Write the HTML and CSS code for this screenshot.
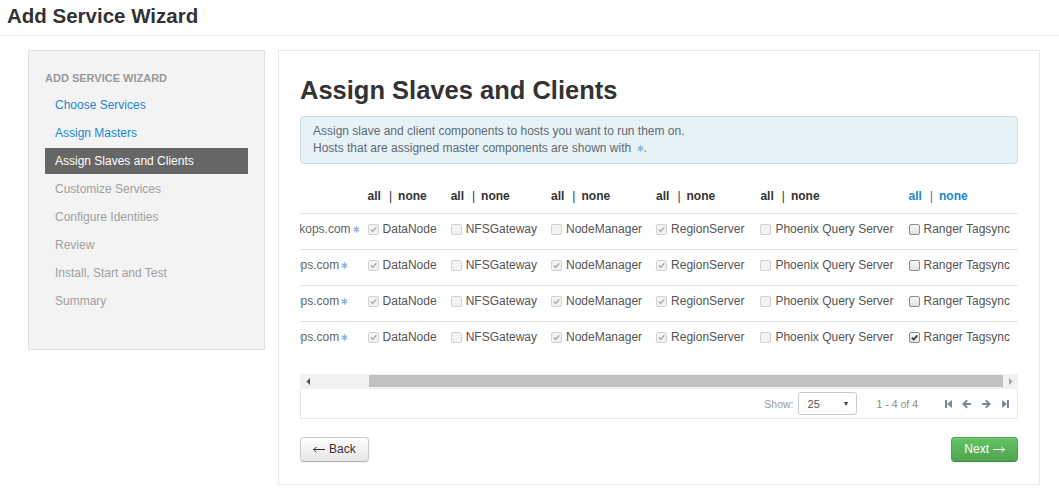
FILE: index.html
```html
<!DOCTYPE html>
<html>
<head>
<meta charset="utf-8">
<title>Add Service Wizard</title>
<link rel="stylesheet" href="styles.css">
</head>
<body>
<header class="page-header"><h1>Add Service Wizard</h1></header>
<div class="layout">
  <aside class="sidebar">
    <div class="nav-header">Add Service Wizard</div>
    <ul class="nav">
      <li><a class="link">Choose Services</a></li>
      <li><a class="link">Assign Masters</a></li>
      <li><a class="active">Assign Slaves and Clients</a></li>
      <li><a class="disabled">Customize Services</a></li>
      <li><a class="disabled">Configure Identities</a></li>
      <li><a class="disabled">Review</a></li>
      <li><a class="disabled">Install, Start and Test</a></li>
      <li><a class="disabled">Summary</a></li>
    </ul>
  </aside>
  <main class="panel">
    <h2>Assign Slaves and Clients</h2>
    <div class="alert">
      Assign slave and client components to hosts you want to run them on.<br>
      Hosts that are assigned master components are shown with <svg class="star" viewBox="0 0 10 10"><path d="M5 0.5V9.5M1.1 2.75L8.9 7.25M1.1 7.25L8.9 2.75"/></svg>.
    </div>
    <div class="scroll">
      <table class="hosts">
        <thead>
          <tr>
            <th class="host"></th>
            <th><span class="sel">all</span><span class="sep">|</span><span class="sel">none</span></th>
            <th><span class="sel">all</span><span class="sep">|</span><span class="sel">none</span></th>
            <th><span class="sel">all</span><span class="sep">|</span><span class="sel">none</span></th>
            <th class="c4"><span class="sel">all</span><span class="sep">|</span><span class="sel">none</span></th>
            <th class="c5"><span class="sel">all</span><span class="sep">|</span><span class="sel">none</span></th>
            <th class="last"><span class="sel blue">all</span><span class="sep blue">|</span><span class="sel blue">none</span></th>
          </tr>
        </thead>
        <tbody>
          <tr>
            <td class="host">node1.cluster.stackops.com<svg class="star" viewBox="0 0 10 10"><path d="M5 0.5V9.5M1.1 2.75L8.9 7.25M1.1 7.25L8.9 2.75"/></svg></td>
            <td><span class="cb"><svg viewBox="0 0 9 9"><path d="M1.8 4.6L3.7 6.5L7.3 2.4"/></svg></span>DataNode</td>
            <td><span class="cb"></span>NFSGateway</td>
            <td><span class="cb"></span>NodeManager</td>
            <td class="c4"><span class="cb"><svg viewBox="0 0 9 9"><path d="M1.8 4.6L3.7 6.5L7.3 2.4"/></svg></span>RegionServer</td>
            <td class="c5"><span class="cb"></span>Phoenix Query Server</td>
            <td class="last"><span class="cb en"></span>Ranger Tagsync</td>
          </tr>
          <tr>
            <td class="host">node2.cluster.netops.com<svg class="star" viewBox="0 0 10 10"><path d="M5 0.5V9.5M1.1 2.75L8.9 7.25M1.1 7.25L8.9 2.75"/></svg></td>
            <td><span class="cb"><svg viewBox="0 0 9 9"><path d="M1.8 4.6L3.7 6.5L7.3 2.4"/></svg></span>DataNode</td>
            <td><span class="cb"></span>NFSGateway</td>
            <td><span class="cb"><svg viewBox="0 0 9 9"><path d="M1.8 4.6L3.7 6.5L7.3 2.4"/></svg></span>NodeManager</td>
            <td class="c4"><span class="cb"><svg viewBox="0 0 9 9"><path d="M1.8 4.6L3.7 6.5L7.3 2.4"/></svg></span>RegionServer</td>
            <td class="c5"><span class="cb"></span>Phoenix Query Server</td>
            <td class="last"><span class="cb en"></span>Ranger Tagsync</td>
          </tr>
          <tr>
            <td class="host">node3.cluster.netops.com<svg class="star" viewBox="0 0 10 10"><path d="M5 0.5V9.5M1.1 2.75L8.9 7.25M1.1 7.25L8.9 2.75"/></svg></td>
            <td><span class="cb"><svg viewBox="0 0 9 9"><path d="M1.8 4.6L3.7 6.5L7.3 2.4"/></svg></span>DataNode</td>
            <td><span class="cb"></span>NFSGateway</td>
            <td><span class="cb"><svg viewBox="0 0 9 9"><path d="M1.8 4.6L3.7 6.5L7.3 2.4"/></svg></span>NodeManager</td>
            <td class="c4"><span class="cb"><svg viewBox="0 0 9 9"><path d="M1.8 4.6L3.7 6.5L7.3 2.4"/></svg></span>RegionServer</td>
            <td class="c5"><span class="cb"></span>Phoenix Query Server</td>
            <td class="last"><span class="cb en"></span>Ranger Tagsync</td>
          </tr>
          <tr>
            <td class="host">node4.cluster.netops.com<svg class="star" viewBox="0 0 10 10"><path d="M5 0.5V9.5M1.1 2.75L8.9 7.25M1.1 7.25L8.9 2.75"/></svg></td>
            <td><span class="cb"><svg viewBox="0 0 9 9"><path d="M1.8 4.6L3.7 6.5L7.3 2.4"/></svg></span>DataNode</td>
            <td><span class="cb"></span>NFSGateway</td>
            <td><span class="cb"><svg viewBox="0 0 9 9"><path d="M1.8 4.6L3.7 6.5L7.3 2.4"/></svg></span>NodeManager</td>
            <td class="c4"><span class="cb"><svg viewBox="0 0 9 9"><path d="M1.8 4.6L3.7 6.5L7.3 2.4"/></svg></span>RegionServer</td>
            <td class="c5"><span class="cb"></span>Phoenix Query Server</td>
            <td class="last"><span class="cb en"><svg viewBox="0 0 9 9"><path d="M1.8 4.6L3.7 6.5L7.3 2.4"/></svg></span>Ranger Tagsync</td>
          </tr>
        </tbody>
      </table>
    </div>
    <div class="pager-box">
      <div class="scrollbar">
        <span class="sb-btn"><svg viewBox="0 0 4 7"><path d="M4 0V7L0.5 3.5Z" fill="#505050"/></svg></span>
        <span class="sb-thumb"></span>
        <span class="sb-btn"><svg viewBox="0 0 4 7"><path d="M0 0V7L3.5 3.5Z" fill="#a3a3a3"/></svg></span>
      </div>
      <div class="pager">
        <span class="show-label">Show:</span>
        <span class="select"><span>25</span><span class="caret">&#9660;</span></span>
        <span class="info">1 - 4 of 4</span>
        <svg class="pg first" viewBox="0 0 7 9"><rect x="0" y="0.5" width="2" height="8"/><path d="M7 0.5V8.5L2 4.5Z"/></svg>
        <svg class="pg prev" viewBox="0 0 8 9"><path d="M4 0.5L0 4.5L4 8.5L5.3 7.2L3.4 5.4H8V3.6H3.4L5.3 1.8Z"/></svg>
        <svg class="pg next" viewBox="0 0 8 9"><path d="M4 0.5L8 4.5L4 8.5L2.7 7.2L4.6 5.4H0V3.6H4.6L2.7 1.8Z"/></svg>
        <svg class="pg last" viewBox="0 0 7 9"><rect x="5" y="0.5" width="2" height="8"/><path d="M0 0.5V8.5L5 4.5Z"/></svg>
      </div>
    </div>
    <div class="actions">
      <button class="btn"><svg class="arr" viewBox="0 0 12 7"><path d="M0.5 3.5H12M3.5 0.8L0.8 3.5L3.5 6.2"/></svg>Back</button>
      <button class="btn btn-success">Next<svg class="arr after" viewBox="0 0 12 7"><path d="M0 3.5H11.5M8.5 0.8L11.2 3.5L8.5 6.2"/></svg></button>
    </div>
  </main>
</div>
</body>
</html>
```

FILE: styles.css
```css
body {
  margin: 0;
  font-family: "Liberation Sans", Arial, sans-serif;
  font-size: 12px;
  color: #333;
  background: #fff;
}

.page-header {
  height: 35px;
  border-bottom: 1px solid #e6e6e6;
  padding-left: 7px;
}

.page-header h1 {
  margin: 0;
  font-size: 20.5px;
  line-height: 32px;
  font-weight: bold;
  color: #333;
}

.layout {
  display: flex;
  align-items: flex-start;
  gap: 13px;
  padding: 14px 19px 0 28px;
}

.sidebar {
  width: 237px;
  flex: none;
  box-sizing: border-box;
  background: #f3f3f3;
  border: 1px solid #e0e0e0;
  padding: 13px 16px 35px;
}

.nav-header {
  font-size: 11px;
  font-weight: bold;
  text-transform: uppercase;
  color: #999;
  line-height: 20px;
  padding: 4px 0 3px;
}

.nav {
  list-style: none;
  margin: 1px 0 0;
  padding: 0;
}

.nav li + li {
  margin-top: 2px;
}

.nav a {
  display: block;
  padding: 3px 10px;
  line-height: 20px;
  font-size: 12px;
}

.nav a.link {
  color: #2188cf;
}

.nav a.active {
  background: #666;
  color: #fff;
}

.nav a.disabled {
  color: #a0a0a0;
}

.panel {
  flex: 1;
  min-width: 0;
  box-sizing: border-box;
  border: 1px solid #e8e8e8;
  padding: 21px 21px 22px;
}

.panel h2 {
  margin: 0 0 8px;
  font-size: 25.5px;
  line-height: 36px;
  font-weight: bold;
  color: #333;
}

.alert {
  background: #e7f2f7;
  border: 1px solid #c9dfe9;
  border-radius: 4px;
  padding: 6px 12px;
  line-height: 17px;
  color: #5b6a74;
  margin-bottom: 17px;
}

.star {
  width: 7px;
  height: 7px;
  margin-left: 2px;
  fill: none;
  stroke: #8cb4d9;
  stroke-width: 1.9;
}

.scroll {
  overflow: hidden;
  direction: rtl;
}

.hosts {
  direction: ltr;
  border-collapse: collapse;
  white-space: nowrap;
}

.hosts th {
  text-align: left;
  font-weight: bold;
  padding: 7px 14px 8px 0;
  line-height: 17px;
  color: #333;
}

.hosts td {
  padding: 7px 14px 11px 0;
  line-height: 17px;
  color: #555;
}

.hosts tbody tr {
  border-top: 1px solid #e2e2e2;
}

.hosts .host {
  padding-left: 8px;
  padding-right: 8px;
  color: #666;
}

.hosts .c4 {
  padding-right: 16px;
}

.hosts .c5 {
  padding-right: 15px;
}

.hosts .last {
  padding-right: 8px;
}

.sep {
  font-weight: normal;
  margin: 0 6px 0 8px;
}

.blue {
  color: #2188cf;
}

.cb {
  display: inline-block;
  width: 11px;
  height: 11px;
  box-sizing: border-box;
  border: 1px solid #d2d2d2;
  background: #f3f3f3;
  border-radius: 2px;
  margin-right: 4px;
  vertical-align: -2px;
}

.cb svg {
  display: block;
  width: 9px;
  height: 9px;
  fill: none;
  stroke: #a9a9a9;
  stroke-width: 1.4;
}

.cb.en {
  border-color: #8e8e8e;
  background: linear-gradient(#f7f7f7, #e2e2e2);
}

.cb.en svg {
  stroke: #333;
  stroke-width: 1.6;
}

.pager-box {
  margin-top: 17px;
}

.scrollbar {
  display: flex;
  height: 15px;
  background: #f1f1f1;
}

.sb-btn {
  width: 15px;
  flex: none;
  display: flex;
  align-items: center;
  justify-content: center;
}

.sb-btn svg {
  width: 4px;
  height: 7px;
}

.sb-thumb {
  flex: 1;
  margin-left: 54px;
  margin-top: 1px;
  height: 12px;
  background: #c1c1c1;
}

.pager {
  height: 29px;
  border: 1px solid #e8e8e8;
  border-top: none;
  display: flex;
  align-items: center;
  justify-content: flex-end;
  padding-right: 8px;
  font-size: 10.5px;
  color: #999;
}

.show-label {
  margin-right: 4px;
}

.select {
  width: 59px;
  height: 23px;
  box-sizing: border-box;
  border: 1px solid #ccc;
  border-radius: 3px;
  background: #fff;
  display: flex;
  align-items: center;
  justify-content: space-between;
  padding: 0 6px 0 9px;
  font-size: 11px;
  color: #555;
}

.caret {
  font-size: 7px;
  color: #444;
}

.info {
  margin-left: 20px;
  margin-right: 27px;
  color: #8a8a8a;
}

.pg {
  height: 10px;
  fill: #7f8994;
}

.pg.first, .pg.last {
  width: 7px;
}

.pg.prev, .pg.next {
  width: 9px;
}

.pg.prev {
  margin-left: 10px;
}

.pg.next, .pg.last {
  margin-left: 11px;
}

.actions {
  display: flex;
  justify-content: space-between;
  margin-top: 18px;
}

.btn {
  display: inline-flex;
  align-items: center;
  font-family: "Liberation Sans", Arial, sans-serif;
  font-size: 12px;
  line-height: 17px;
  padding: 3px 12px;
  border: 1px solid #ccc;
  border-bottom-color: #b3b3b3;
  border-radius: 4px;
  background: linear-gradient(#ffffff, #e6e6e6);
  color: #333;
  box-shadow: inset 0 1px 0 rgba(255,255,255,0.2), 0 1px 2px rgba(0,0,0,0.05);
}

.arr {
  width: 12px;
  height: 7px;
  margin-right: 4px;
  fill: none;
  stroke: currentColor;
  stroke-width: 1;
}

.arr.after {
  margin-right: 0;
  margin-left: 4px;
}

.btn-success {
  background: linear-gradient(#62c462, #51a351);
  border-color: #4f9f4f;
  border-bottom-color: #3f8a3f;
  color: #fff;
}
```
